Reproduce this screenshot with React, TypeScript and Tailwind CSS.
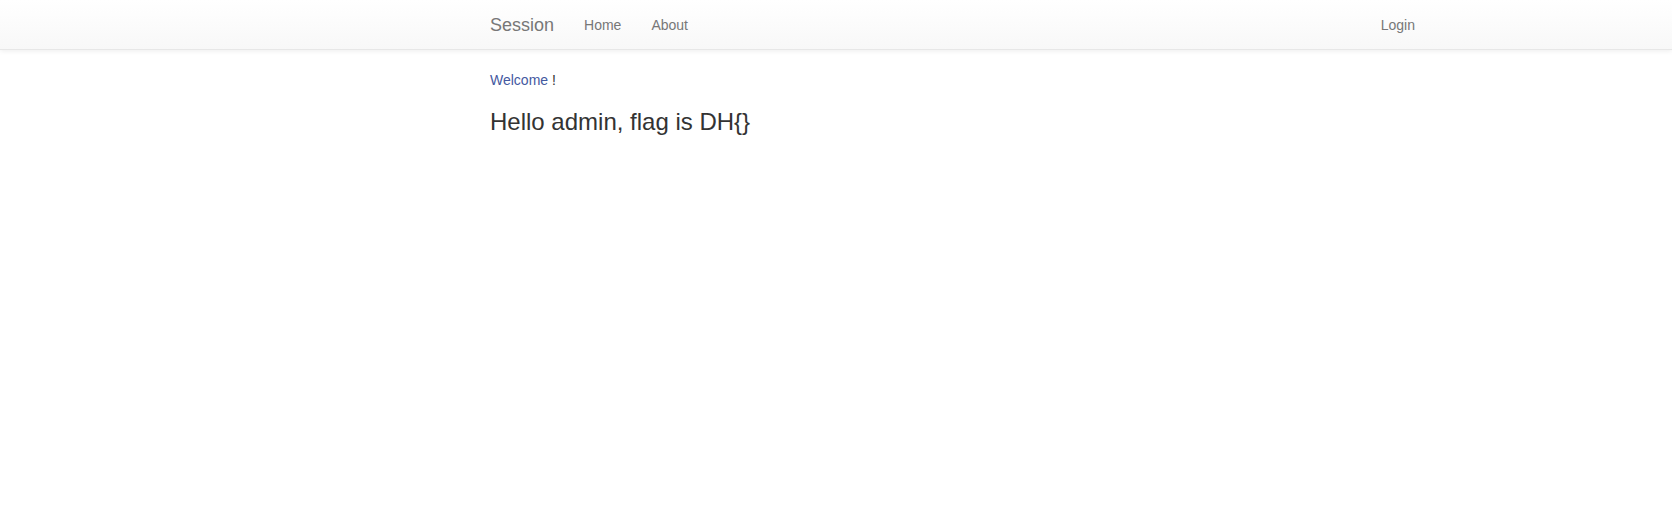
export default function App() {
  return (
    <div className="min-h-[532px] bg-white font-['Liberation_Sans',Arial,sans-serif] text-[14px] leading-[20px] text-[#333]">
      <nav className="h-[50px] border-b border-[#e7e7e7] bg-gradient-to-b from-white to-[#f8f8f8] shadow-[0_1px_5px_rgba(0,0,0,0.075)]">
        <div className="ml-[475px] flex w-[955px] items-center justify-between">
          <div className="flex items-center">
            <a className="px-[15px] py-[15px] text-[18px] leading-[20px] text-[#777]">Session</a>
            <a className="px-[15px] py-[15px] text-[#777]">Home</a>
            <a className="px-[15px] py-[15px] text-[#777]">About</a>
          </div>
          <a className="px-[15px] py-[15px] text-[#777]">Login</a>
        </div>
      </nav>
      <main className="ml-[475px] w-[955px] px-[15px] pt-[20px]">
        <p className="m-0">
          <span className="text-[#44599f]">Welcome</span> <span className="text-[#333]">!</span>
        </p>
        <h3 className="mt-[19px] text-[24px] leading-[26px] font-normal text-[#333]">Hello admin, flag is DH{'{}'}</h3>
      </main>
    </div>
  )
}
